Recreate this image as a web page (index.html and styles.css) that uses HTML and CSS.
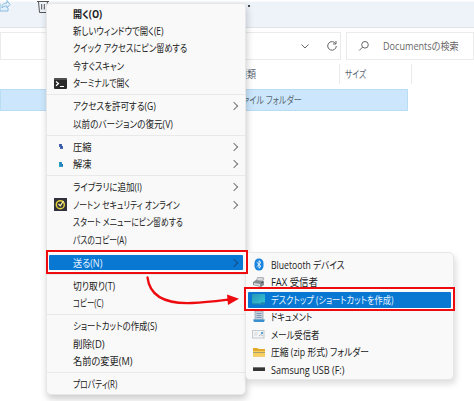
FILE: index.html
```html
<!DOCTYPE html>
<html lang="ja">
<head>
<meta charset="utf-8">
<title>Documents</title>
<link rel="stylesheet" href="styles.css">
</head>
<body>
<div class="explorer">
  <header class="toolbar">
    <svg class="share" width="14" height="14" viewBox="0 0 14 14"><path d="M1 3.500V11H9V8M3 8C3 4 5 3 8 3V0.500L11 4.500L8 8V6C6 6 4 6.500 3 8Z"/></svg>
    <svg class="trash" width="12" height="14" viewBox="0 0 12 14"><path d="M0 1.500H12M1.500 1.500L2.500 12.500H9.500L10.500 1.500M4.700 4V9.500M7.300 4V9.500"/></svg>
    <i class="dot"></i>
  </header>
  <div class="address-row">
    <div class="address">
      <svg width="10" height="10" viewBox="0 0 10 10"><path d="M1.500 3.500L5 7L8.500 3.500"/></svg>
      <svg width="12" height="12" viewBox="0 0 12 12"><path d="M9.700 3.700A4.300 4.300 0 1 0 10.300 6M10 1V4H7"/></svg>
    </div>
    <div class="search">
      <svg width="12" height="12" viewBox="0 0 12 12"><circle cx="7" cy="4.800" r="3.300"/><path d="M4.500 7.200L1.200 10.500"/></svg>
      <span class="t" data-width="75.500">Documentsの検索</span>
    </div>
  </div>
  <div class="columns"><div class="kind"><span class="t" data-width="18">種類</span></div><div class="size"><span class="t" data-width="21">サイズ</span></div></div>
  <div class="file-row"><span class="t" data-width="66">ファイル フォルダー</span></div>
</div>

<nav class="menu main-menu">
  <div class="item"><i class="icon"></i><b class="t" data-width="29">開く(O)</b></div>
  <div class="item"><i class="icon"></i><span class="t" data-width="90.500">新しいウィンドウで開く(E)</span></div>
  <div class="item"><i class="icon"></i><span class="t" data-width="114">クイック アクセスにピン留めする</span></div>
  <div class="item"><i class="icon"></i><span class="t" data-width="51">今すぐスキャン</span></div>
  <div class="item"><i class="icon"><svg width="13" height="11" viewBox="0 0 13 11"><rect width="13" height="11" rx="1" fill="#292929"/><path d="M0 1H13" stroke="#777"/><path d="M2 3.500L4.500 5.500L2 7.800M6 8.500H10" fill="none" stroke="#fff" stroke-width="1.200"/></svg></i><span class="t" data-width="57">ターミナルで開く</span></div>
  <hr>
  <div class="item more"><i class="icon"></i><span class="t" data-width="83">アクセスを許可する(G)</span></div>
  <div class="item"><i class="icon"></i><span class="t" data-width="99.500">以前のバージョンの復元(V)</span></div>
  <hr>
  <div class="item more"><i class="icon"><svg width="6" height="7" viewBox="0 0 6 7"><path d="M1 1H4V3H5V6H2V4H1Z" fill="#4868b6"/><path d="M2 2H3M3 4H4" stroke="#233b82"/></svg></i><span class="t" data-width="18.500">圧縮</span></div>
  <div class="item more"><i class="icon"><svg width="6" height="7" viewBox="0 0 6 7"><path d="M1 1H4V3H5V6H1Z" fill="#2d9bc7"/><path d="M2 2H3M3 4H5" stroke="#17579b"/></svg></i><span class="t" data-width="18.500">解凍</span></div>
  <hr>
  <div class="item more"><i class="icon"></i><span class="t" data-width="68.500">ライブラリに追加(I)</span></div>
  <div class="item more"><i class="icon"><svg width="13" height="13" viewBox="0 0 13 13"><rect width="13" height="13" fill="#30313a"/><circle cx="6.300" cy="6.700" r="4" fill="none" stroke="#e7d438" stroke-width="1.500"/><path d="M4.500 6L6.300 7.800L9.500 3" fill="none" stroke="#fff6a4" stroke-width="1.300"/></svg></i><span class="t" data-width="107">ノートン セキュリティ オンライン</span></div>
  <div class="item"><i class="icon"></i><span class="t" data-width="110">スタート メニューにピン留めする</span></div>
  <div class="item"><i class="icon"></i><span class="t" data-width="53.500">パスのコピー(A)</span></div>
  <hr>
  <div class="item more selected"><i class="icon"></i><span class="t" data-width="29">送る(N)</span></div>
  <hr>
  <div class="item"><i class="icon"></i><span class="t" data-width="42">切り取り(T)</span></div>
  <div class="item"><i class="icon"></i><span class="t" data-width="30.500">コピー(C)</span></div>
  <hr>
  <div class="item"><i class="icon"></i><span class="t" data-width="84">ショートカットの作成(S)</span></div>
  <div class="item"><i class="icon"></i><span class="t" data-width="31.500">削除(D)</span></div>
  <div class="item"><i class="icon"></i><span class="t" data-width="60">名前の変更(M)</span></div>
  <hr>
  <div class="item"><i class="icon"></i><span class="t" data-width="44.500">プロパティ(R)</span></div>
</nav>

<nav class="menu sub-menu">
  <div class="item"><i class="icon"><svg width="10" height="13" viewBox="0 0 10 13"><rect x=".5" y=".5" width="9" height="12" rx="4.500" fill="#1683df"/><path d="M2.700 4.200L7 8.300L5 10.200V2.700L7 4.600L2.700 8.700" fill="none" stroke="#fff" stroke-width=".9"/></svg></i><span class="t" data-width="73.500">Bluetooth デバイス</span></div>
  <div class="item"><i class="icon"><svg width="13" height="11" viewBox="0 0 13 11"><path d="M4 4L6 0L12 1L10 5Z" fill="#d9dde0" stroke="#899197" stroke-width=".7"/><path d="M1 5L4 3L12 4V8L9 10L1 8Z" fill="#858d93"/><path d="M2 6L8 7V9L2 7.500Z" fill="#d9dcde"/><path d="M9 6L11 5" stroke="#444"/></svg></i><span class="t" data-width="47">FAX 受信者</span></div>
  <div class="item selected"><i class="icon"><svg width="13" height="11" viewBox="0 0 13 11"><defs><linearGradient id="desk" x2="1" y2="1"><stop stop-color="#2996b5"/><stop offset="1" stop-color="#36c7d8"/></linearGradient></defs><rect width="13" height="10.500" rx=".7" fill="url(#desk)"/><path d="M0 10H13M10 8V10M12 8V10" stroke="#145f99" stroke-width=".8"/></svg></i><span class="t" data-width="122.500">デスクトップ (ショートカットを作成)</span></div>
  <div class="item"><i class="icon"><svg width="12" height="12" viewBox="0 0 12 12"><path d="M2 0H10V9H2Z" fill="#cad3dc" stroke="#8498aa" stroke-width=".7"/><path d="M3.500 2.500H8.500M3.500 4.500H8.500M3.500 6.500H8.500" stroke="#6687a8" stroke-width=".8"/><path d="M0 8.500H12L11 11H1Z" fill="#3b91cf"/></svg></i><span class="t" data-width="41">ドキュメント</span></div>
  <div class="item"><i class="icon"><svg width="13" height="9" viewBox="0 0 13 9"><rect x=".5" y=".5" width="11.500" height="7.500" fill="#f4f5f6" stroke="#c4c9ce"/><path d="M2 3H6M2 5H5" stroke="#c4c9ce" stroke-width=".7"/><rect x="9" y="2" width="2" height="2" fill="#58a1d8"/><path d="M7 6L9 4.500L11 6" stroke="#b0b8bf" fill="none"/></svg></i><span class="t" data-width="48.500">メール受信者</span></div>
  <div class="item"><i class="icon"><svg width="12" height="10" viewBox="0 0 12 10"><path d="M0 1H4.500L5.500 2H12V9.500H0Z" fill="#e2a92c"/><path d="M0 4H12V9.500H0Z" fill="#f7cf61"/><path d="M0 5.500H12" stroke="#a9a070" stroke-width="1"/></svg></i><span class="t" data-width="98.500">圧縮 (zip 形式) フォルダー</span></div>
  <div class="item"><i class="icon"><svg width="12" height="5" viewBox="0 0 12 5"><rect width="12" height="4" rx=".5" fill="#353535"/><path d="M0 .5H12" stroke="#777"/></svg></i><span class="t" data-width="73.500">Samsung USB (F:)</span></div>
</nav>

<div class="highlight send-highlight"></div>
<div class="highlight desktop-highlight"></div>
<svg class="arrow" width="100" height="36" viewBox="0 0 100 36"><path d="M3.500 2.500C6 23 24 29 48 28C62 27.500 73 26 85 24.500" fill="none" stroke="#ee0b10" stroke-width="2.300" stroke-linecap="round"/><path d="M83 19.500L95 23.700L84 30Z" fill="#ee0b10"/></svg>
<script src="script.js"></script>
</body>
</html>
```
FILE: styles.css
```css
* { box-sizing: border-box; }
body {
  margin: 0;
  width: 474px;
  height: 401px;
  position: relative;
  overflow: hidden;
  background: #fff;
  color: #202020;
  font: 10px/14px "Open Sans", "Noto Sans CJK JP", sans-serif;
  font-feature-settings: "palt";
}
svg { display: block; flex: none; }
.t { display: inline-block; white-space: nowrap; transform-origin: 0 50%; }

.toolbar {
  height: 28px;
  display: flex;
  background: linear-gradient(#fff 0 1px, #eef3fa 2px);
  border-bottom: 1px solid #e0e3e7;
}
.toolbar svg { fill: none; stroke: #555; stroke-width: 1; }
.toolbar .share { stroke: #8bbade; fill: #e3f1fb; margin-left: -1px; }
.toolbar .trash { margin-left: 24px; }
.dot { width: 2px; height: 2px; border-radius: 1px; background: #111; margin: 5px 0 0 199px; }
.address-row { display: flex; gap: 5px; margin-top: 4px; height: 28px; }
.address, .search {
  display: flex;
  align-items: center;
  border: 1px solid #ebebeb;
  color: #676767;
}
.address { width: 346px; justify-content: flex-end; gap: 16px; padding-right: 2px; }
.address { padding-right: 7px; }
.search { width: 130px; padding-left: 11px; gap: 13px; }
.address svg, .search svg { fill: none; stroke: #666; stroke-width: 1; }
.columns { display: flex; height: 20px; margin-top: 4px; color: #5b6573; }
.columns div { display: flex; align-items: center; border-right: 1px solid #ebebeb; }
.kind { width: 340px; padding-left: 238px; }
.size { width: 72px; padding-left: 5px; }
.file-row {
  width: 408px;
  height: 22px;
  margin-top: 5px;
  padding-left: 235px;
  display: flex;
  align-items: center;
  background: #cce7fd;
  border: 1px solid #b9dcf5;
  color: #596773;
}

.menu { position: absolute; background: #f9f9f9; border: 1px solid #e7e7e7; }
.main-menu {
  left: 46px;
  top: 3px;
  width: 200px;
  height: 392px;
  padding: 1px 2px 0;
  border-radius: 3px 3px 5px 5px;
  box-shadow: 1px 4px 7px #0003;
}
.sub-menu {
  left: 245px;
  top: 252px;
  width: 209px;
  height: 128px;
  padding: 3px 2px;
  border-radius: 5px;
  box-shadow: 2px 4px 6px #0002;
}
.item { display: flex; align-items: center; position: relative; height: 17.4px; }
.sub-menu .item { height: 17.5px; }
.icon { display: flex; justify-content: center; align-items: center; width: 13px; margin: 0 6px 0 5px; flex: none; }
.sub-menu .icon { margin: 0 6px 0 4px; }
.item .t, .item .icon { z-index: 1; }
hr { height: 1px; margin: 2.385px -2px; border: 0; background: #e9e9e9; }
.more::after {
  content: "";
  width: 5px;
  height: 5px;
  border: solid #777;
  border-width: 1px 1px 0 0;
  transform: rotate(45deg);
  margin: 0 6px 0 auto;
  z-index: 1;
}
.selected { color: #e7f5ff; }
.selected::before {
  content: "";
  position: absolute;
  inset: 1px 0;
  border-radius: 1px;
  background: #0878d3;
}
.selected.more::after { border-color: #174d84; }
.highlight { position: absolute; border: 2px solid #ee0b10; box-shadow: inset 0 0 0 1px #fff; }
.send-highlight { left: 46px; top: 250px; width: 202px; height: 24px; }
.desktop-highlight { left: 244px; top: 287px; width: 211px; height: 24px; }
.arrow { position: absolute; left: 144px; top: 275px; }
.address { padding-right: 2px; }
```
FILE: script.js
```js
document.querySelectorAll("[data-width]").forEach((label) => {
  const scale = Number(label.dataset.width) / label.offsetWidth;
  label.style.transform = `scaleX(${scale})`;
});
```
